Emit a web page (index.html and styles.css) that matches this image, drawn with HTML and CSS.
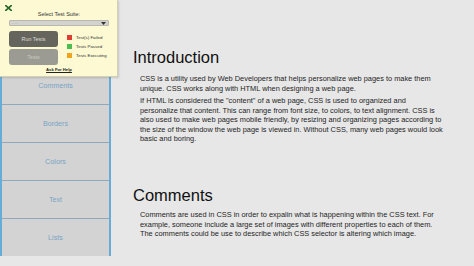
FILE: index.html
```html
<!DOCTYPE html>
<html lang="en">
<head>
<meta charset="utf-8">
<title>CSS Guide</title>
<link rel="stylesheet" href="styles.css">
</head>
<body>
<div class="page">
  <nav class="sidebar">
    <div class="nav-item">Introduction</div>
    <div class="nav-item">Comments</div>
    <div class="nav-item">Borders</div>
    <div class="nav-item">Colors</div>
    <div class="nav-item">Text</div>
    <div class="nav-item">Lists</div>
  </nav>
  <main class="content">
    <section class="section">
      <h1 class="heading">Introduction</h1>
      <p class="para">CSS is a utility used by Web Developers that helps personalize web pages to make them<br>unique. CSS works along with HTML when designing a web page.</p>
      <p class="para para-next">If HTML is considered the "content" of a web page, CSS is used to organized and<br>personalize that content. This can range from font size, to colors, to text alignment. CSS is<br>also used to make web pages mobile friendly, by resizing and organizing pages according to<br>the size of the window the web page is viewed in. Without CSS, many web pages would look<br>basic and boring.</p>
    </section>
    <section class="section section-next">
      <h1 class="heading">Comments</h1>
      <p class="para">Comments are used in CSS in order to expalin what is happening within the CSS text. For<br>example, someone include a large set of images with different properties to each of them.<br>The comments could be use to describe which CSS selector is altering which image.</p>
    </section>
  </main>
</div>

<div class="tester">
  <div class="close-row">
    <svg class="close-icon" width="7" height="6" viewBox="0 0 7 6" aria-label="Close">
      <path d="M0.8 0.6 L6.2 5.4 M6.2 0.6 L0.8 5.4" stroke="#236523" stroke-width="1.6" stroke-linecap="square" fill="none"/>
    </svg>
  </div>
  <div class="tester-title">Select Test Suite:</div>
  <div class="fake-select">
    <span class="select-text">- - -</span>
    <svg class="select-arrow" width="5" height="3" viewBox="0 0 5 3"><path d="M0 0 L5 0 L2.5 3 Z" fill="#333"/></svg>
  </div>
  <div class="controls">
    <div class="buttons">
      <div class="btn btn-run">Run Tests</div>
      <div class="btn btn-tests">Tests</div>
    </div>
    <div class="legend">
      <div class="legend-row"><span class="swatch swatch-fail"></span>Test(s) Failed</div>
      <div class="legend-row"><span class="swatch swatch-pass"></span>Tests Passed</div>
      <div class="legend-row"><span class="swatch swatch-exec"></span>Tests Executing</div>
    </div>
  </div>
  <div class="help"><span class="help-link">Ask For Help</span></div>
</div>
</body>
</html>
```
FILE: styles.css
```css
html, body {
  margin: 0;
  padding: 0;
}
body {
  background: #e7e7e7;
  font-family: "Liberation Sans", Arial, sans-serif;
  width: 474px;
  height: 266px;
  overflow: hidden;
  position: relative;
}
.page {
  display: flex;
  align-items: flex-start;
}
.sidebar {
  width: 107px;
  flex: none;
  border-left: 2px solid #66acd6;
  border-right: 2px solid #66acd6;
  background: #d3d3d3;
  padding-top: 28px;
  display: flex;
  flex-direction: column;
}
.nav-item {
  height: 37px;
  border-top: 1px solid #8fa9bb;
  display: flex;
  align-items: center;
  justify-content: center;
  font-size: 7.2px;
  color: #7aa3c4;
}
.content {
  padding: 48px 0 0 22px;
  flex: 1;
}
.heading {
  margin: 0;
  font-size: 16.5px;
  line-height: 19px;
  font-weight: normal;
  color: #111;
}
.para {
  margin: 7px 0 0 7px;
  font-size: 7.4px;
  line-height: 9.5px;
  color: #1e1e1e;
  white-space: nowrap;
}
.para-next {
  margin-top: 3.2px;
}
.section-next {
  margin-top: 42.5px;
}
.section-next .para {
  margin-top: 5px;
}

/* Test popup overlay */
.tester {
  position: absolute;
  left: 0;
  top: 0;
  width: 118px;
  height: 77px;
  padding: 5px 8px 0 9px;
  box-sizing: border-box;
  background: #fcf9d3;
  border-right: 1px solid #d2d0b4;
  border-bottom: 1px solid #d2d0b4;
  box-shadow: 1px 1px 2px rgba(0,0,0,0.15);
  display: flex;
  flex-direction: column;
}
.close-row {
  height: 6px;
  margin-left: -4px;
  display: flex;
}
.close-icon {
  display: block;
}
.tester-title {
  text-align: center;
  font-size: 5.5px;
  line-height: 7px;
  color: #333;
}
.fake-select {
  margin-top: 2px;
  height: 6px;
  background: #d2d2ce;
  border: 0.5px solid #b8b8b0;
  box-sizing: border-box;
  border-radius: 1px;
  display: flex;
  align-items: center;
  justify-content: space-between;
  padding: 0 2px;
}
.select-text {
  font-size: 3.5px;
  color: #888;
  line-height: 4px;
}
.select-arrow {
  display: block;
}
.controls {
  margin-top: 5px;
  display: flex;
  gap: 9px;
}
.buttons {
  width: 49px;
  display: flex;
  flex-direction: column;
  gap: 2px;
}
.btn {
  height: 16px;
  border-radius: 3px;
  display: flex;
  align-items: center;
  justify-content: center;
  font-size: 5.4px;
}
.btn-run {
  background: #66655d;
  color: #dcdcd4;
}
.btn-tests {
  background: #9b9b93;
  color: #c9c9c1;
}
.legend {
  padding-top: 4px;
  display: flex;
  flex-direction: column;
  gap: 4px;
}
.legend-row {
  height: 5px;
  display: flex;
  align-items: center;
  gap: 4px;
  font-size: 4.4px;
  color: #333;
  white-space: nowrap;
}
.swatch {
  width: 5px;
  height: 5px;
  flex: none;
}
.swatch-fail { background: #e33b36; }
.swatch-pass { background: #4cbd50; }
.swatch-exec { background: #f0a31e; }
.help {
  margin-top: 2px;
  text-align: center;
  font-size: 4.2px;
  line-height: 5px;
  font-weight: bold;
  color: #222;
}
.help-link {
  text-decoration: underline;
}
```
